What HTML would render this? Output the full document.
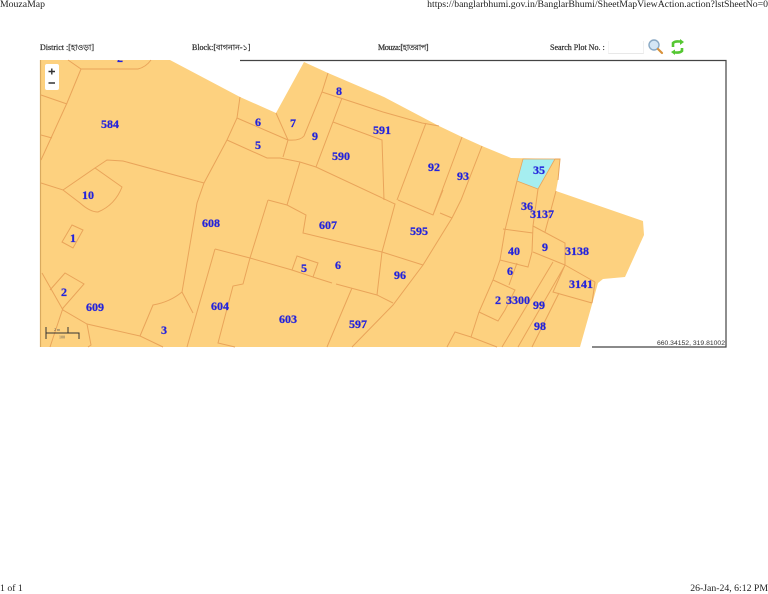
<!DOCTYPE html>
<html>
<head>
<meta charset="utf-8">
<style>
html,body{margin:0;padding:0;background:#fff;}
body{width:768px;height:594px;overflow:hidden;position:relative;font-family:"Liberation Serif",serif;color:#222;filter:blur(.35px);}
.t{position:absolute;white-space:nowrap;font-size:9.75px;line-height:10px;}
.h{position:absolute;white-space:nowrap;font-size:8px;line-height:10px;color:#333;top:43px;-webkit-text-stroke:.25px #333;}
svg{position:absolute;left:0;top:0;}
</style>
</head>
<body>
<div class="t" style="left:0;top:0">MouzaMap</div>
<div class="t" style="right:0;top:0">https://banglarbhumi.gov.in/BanglarBhumi/SheetMapViewAction.action?lstSheetNo=0</div>
<div class="h" style="left:40px">District :[হাওড়া]</div>
<div class="h" style="left:192px">Block:[বাগনান-১]</div>
<div class="h" style="left:378px;letter-spacing:-.35px">Mouza:[হাতরাপ]</div>
<div class="h" style="left:550px">Search Plot No. :</div>
<div style="position:absolute;left:608px;top:41px;width:34px;height:12px;border-bottom:1px solid #e8e8e8;border-right:1px solid #f0f0f0;border-left:1px solid #f4f4f4"></div>
<svg width="768" height="594" viewBox="0 0 768 594" font-family="Liberation Serif, serif">
  <g>
    <path d="M240 60.500H726V347H592" fill="none" stroke="#444" stroke-width="1.200"/>
    <path d="M40 60H170L240 97L276 113L304 62L328 73L384 97L439 126L462 137L482 146L511 158L560 159L558 180L556 191L643 221L644 235L625 277L603 279L598 283L580 347H40Z" fill="#fdd17f"/>
    <path d="M40.500 60V347" stroke="#d9aa5e" stroke-width="1.200" fill="none"/>
    <path d="M523 159H555L538 189L517 181Z" fill="#a5eef0"/>
    <g fill="none" stroke="#e9a45a" stroke-width="1">
      <path d="M68 60L81 69L138 69Q146 67 151 60"/>
      <path d="M81 69L67 103L41 160"/>
      <path d="M41 95L67 104M41 135L52 138"/>
      <path d="M41 183L63 190L95 168L122 187Q115 205 98 212Q90 212 80 203L63 190"/>
      <path d="M95 168L107 160L123 161L204 183"/>
      <path d="M240 97L237 118L227 140L204 183L197 203L182 292L193 313"/>
      <path d="M182 292Q170 302 153 305L140 336L163 347"/>
      <path d="M237 118L288 140M227 140L267 158L280 158L300 162"/>
      <path d="M276 113L288 140L283 157"/>
      <path d="M288 140Q300 141 304 136L322 92L328 73"/>
      <path d="M322 92L383 112L422 123L439 126"/>
      <path d="M342 98L316 167M333 122L382 140L384 200"/>
      <path d="M300 162L287 205L306 215L303 233L382 252L423 265"/>
      <path d="M300 162L316 167L395 204L382 252L377 295L393 303"/>
      <path d="M398 200L433 215L443 190"/>
      <path d="M426 123L397 200"/>
      <path d="M462 137L433 215M482 146L461 200L452 218L423 265L393 305L352 347"/>
      <path d="M440 213L452 218"/>
      <path d="M297 256L318 263L313 277L292 270Z"/>
      <path d="M268 200L287 205M268 200L250 258L243 284L233 286L218 343L235 347"/>
      <path d="M215 249L250 258L292 270M313 277L332 283M336 284L377 295"/>
      <path d="M215 249L187 347M352 288L327 347"/>
      <path d="M42 273L63 310L87 324L140 336"/>
      <path d="M50 290L65 273L84 284L63 308L50 347M87 324L91 345L88 347"/>
      <path d="M72 225L83 230L73 248L62 242Z"/>
      <path d="M517 181L505 230L500 260L493 280L479 312L471 337L455 332L447 347M471 337L497 347"/>
      <path d="M538 189L533 226L532 252L528 267L500 260"/>
      <path d="M503 229L533 233M533 226L565 243V265L595 282M533 252L565 265M556 191L545 232"/>
      <path d="M517 263L509 285M493 280L515 290L505 310L498 321L479 312"/>
      <path d="M553 262L502 347M564 267L518 347M565 265L553 292L592 303M559 293L532 347"/>
      <path d="M595 282L592 303"/>
      <path d="M555 159L560 159L558 180"/>
    </g>
    <path d="M517 181L523 159H555L538 189Z" fill="none" stroke="#e9a45a" stroke-width=".8"/>
  </g>
  <g font-size="12" font-weight="bold" fill="#2323dc" stroke="#2323dc" stroke-width=".25" text-anchor="middle">
    <text x="120" y="62">2</text>
    <text x="339" y="95">8</text><text x="110" y="128">584</text><text x="258" y="126">6</text><text x="293" y="127">7</text>
    <text x="315" y="140">9</text><text x="382" y="134">591</text><text x="258" y="149">5</text><text x="341" y="160">590</text>
    <text x="434" y="171">92</text><text x="463" y="180">93</text><text x="539" y="174">35</text><text x="88" y="199">10</text>
    <text x="527" y="210">36</text><text x="542" y="218">3137</text><text x="211" y="227">608</text><text x="328" y="229">607</text>
    <text x="419" y="235">595</text><text x="73" y="242">1</text><text x="514" y="255">40</text><text x="545" y="251">9</text>
    <text x="577" y="255">3138</text><text x="338" y="269">6</text><text x="304" y="272">5</text><text x="400" y="279">96</text>
    <text x="510" y="275">6</text><text x="581" y="288">3141</text><text x="64" y="296">2</text><text x="498" y="304">2</text>
    <text x="518" y="304">3300</text><text x="539" y="309">99</text><text x="95" y="311">609</text><text x="220" y="310">604</text>
    <text x="288" y="323">603</text><text x="358" y="328">597</text><text x="540" y="330">98</text><text x="164" y="334">3</text>
  </g>
  <rect x="110" y="50" width="20" height="10" fill="#fff"/>
  <!-- zoom control -->
  <rect x="45" y="64" width="14" height="26" rx="2" fill="#fff"/>
  <path d="M48.500 71.500H55M51.800 68.500V74.500M48.500 83H55" stroke="#333" stroke-width="1.400" fill="none"/>
  <!-- scale -->
  <path d="M46 327V339M46 333H79V339M68 327V333" stroke="#333" stroke-width="1" fill="none"/>
  <text x="57" y="331" font-size="4" fill="#555" text-anchor="middle">2 m</text>
  <text x="62" y="338.500" font-size="4" fill="#555" text-anchor="middle">100</text>
  <!-- coordinates -->
  <text x="725" y="345" font-size="6.800" font-family="Liberation Sans, sans-serif" fill="#333" text-anchor="end">660.34152, 319.81002</text>
  <!-- search icon -->
  <circle cx="654" cy="45" r="5" fill="#d4e6f5" stroke="#8aa9c4" stroke-width="1.400"/>
  <path d="M658 49L662 53" stroke="#d8913a" stroke-width="2.200" stroke-linecap="round"/>
  <!-- refresh icon -->
  <path d="M673 47V43Q675 41 679 41.500H681" fill="none" stroke="#55c732" stroke-width="2.600"/>
  <path d="M680 39L684 42L680 45Z" fill="#55c732"/>
  <path d="M682 48V51Q680 53 676 52.500H674" fill="none" stroke="#55c732" stroke-width="2.600"/>
  <path d="M675 49.500L671 52L675 55Z" fill="#55c732"/>
</svg>
<div class="t" style="left:0;top:584px">1 of 1</div>
<div class="t" style="right:0;top:584px">26-Jan-24, 6:12 PM</div>
</body>
</html>
